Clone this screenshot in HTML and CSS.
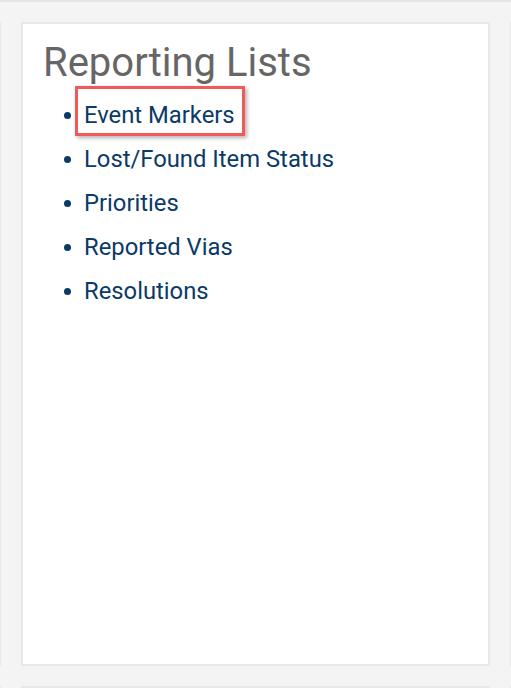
FILE: index.html
```html
<!DOCTYPE html>
<html>
<head>
<meta charset="utf-8">
<link rel="stylesheet" href="styles.css">
</head>
<body>
<div class="page">
  <div class="grid">
    <div class="peek"></div>
    <div class="card">
      <h1 class="title">Reporting Lists</h1>
      <ul class="list">
        <li><a class="link highlighted" href="#">Event Markers</a></li>
        <li><a class="link" href="#">Lost/Found Item Status</a></li>
        <li><a class="link" href="#">Priorities</a></li>
        <li><a class="link" href="#">Reported Vias</a></li>
        <li><a class="link" href="#">Resolutions</a></li>
      </ul>
    </div>
    <div class="peek"></div>
    <div class="peek"></div>
    <div class="card next"></div>
    <div class="peek"></div>
  </div>
</div>
</body>
</html>
```

FILE: styles.css
```css
html, body {
  margin: 0;
  padding: 0;
  background: #f4f4f4;
  font-family: Roboto, "Liberation Sans", sans-serif;
  overflow: hidden;
}
.page {
  border-top: 2px solid #e6e6e6;
  padding-top: 20px;
  height: 688px;
  box-sizing: border-box;
  overflow: hidden;
}
.grid {
  display: grid;
  grid-template-columns: 1px 469px 1px;
  grid-template-rows: 644px 2px;
  column-gap: 20px;
  row-gap: 20px;
}
.peek {
  background: #e8e8e8;
}
.card {
  background: #fff;
  border: 2px solid #e8e8e8;
  box-sizing: border-box;
  padding: 0 20px;
}
.next {
  border-bottom: none;
}
.title {
  margin: 16px 0 0 0;
  font-size: 40px;
  font-weight: 400;
  line-height: 46px;
  color: #666666;
}
.list {
  margin: 7px 0 0 0;
  padding-left: 41px;
  list-style: none;
  color: #0b3a67;
  font-size: 23.8px;
  line-height: 44px;
}
.list li {
  display: flex;
  align-items: center;
  gap: 13px;
  margin-left: -20px;
}
.list li::before {
  content: "";
  display: block;
  width: 7px;
  height: 7px;
  min-width: 7px;
  border-radius: 50%;
  background: #0b3a67;
  flex: none;
}
.link {
  color: #0b3a67;
  text-decoration: none;
}
.highlighted {
  position: relative;
}
.highlighted::after {
  content: "";
  position: absolute;
  left: -9px;
  right: -10px;
  top: -7px;
  bottom: 1px;
  border: 3px solid #f25a5a;
  box-shadow: 2px 2px 4px rgba(0, 0, 0, 0.3);
}
```
